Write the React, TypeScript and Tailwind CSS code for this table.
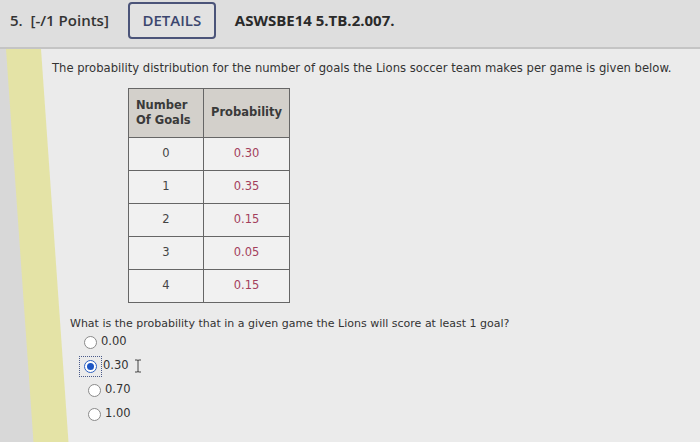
import React from 'react';

const rows = [
  { goals: '0', prob: '0.30' },
  { goals: '1', prob: '0.35' },
  { goals: '2', prob: '0.15' },
  { goals: '3', prob: '0.05' },
  { goals: '4', prob: '0.15' },
];

const options = ['0.00', '0.30', '0.70', '1.00'];

function Radio({ checked }: { checked: boolean }) {
  return (
    <span
      className={`flex h-[13px] w-[13px] items-center justify-center rounded-full border bg-white ${
        checked ? 'border-[#2b5fc0]' : 'border-[#8a8a8a]'
      }`}
    >
      {checked && <span className="h-[7px] w-[7px] rounded-full bg-[#1d56c4]" />}
    </span>
  );
}

function IBeam() {
  return (
    <svg width="8" height="14" viewBox="0 0 8 14" className="ml-[5px]">
      <path d="M1 1h2.2M4.8 1H7M4 1.5v11M1 13h2.2M4.8 13H7M3 1c.6 0 1 .3 1 .8M5 1c-.6 0-1 .3-1 .8M3 13c.6 0 1-.3 1-.8M5 13c-.6 0-1-.3-1-.8" stroke="#444" strokeWidth="1" fill="none" />
    </svg>
  );
}

export default function App() {
  return (
    <div className="h-[442px] w-[700px] overflow-hidden bg-[#d8d8d8] font-['DejaVu_Sans',sans-serif] text-[#333]">
      {/* Header */}
      <div className="flex h-[49px] items-start border-b-2 border-[#c4c4c4] bg-[#dedede] pl-[10px] pt-[2px] font-['Open_Sans',sans-serif]">
        <span className="mt-[7px] text-[15px] font-semibold text-[#333]">5.&nbsp; [-/1 Points]</span>
        <div className="ml-[19px] flex h-[37px] w-[88px] items-center justify-center rounded-[4px] border-2 border-[#4b5479] bg-[#e2e2e2] text-[15px] font-semibold text-[#3b466e]">
          DETAILS
        </div>
        <span className="ml-[19px] mt-[7px] text-[15px] font-bold text-[#2a2a2a]">ASWSBE14 5.TB.2.007.</span>
      </div>

      {/* Body */}
      <div className="flex h-[393px]">
        <div className="ml-[6px] w-[35px] origin-top skew-x-[4deg] bg-[#e4e3a6]" />
        <div className="flex-1 bg-[#ebebeb] pl-[11px]">
          <p className="mt-[11px] whitespace-nowrap text-[11.6px] leading-[16px] text-[#333]">
            The probability distribution for the number of goals the Lions soccer team makes per game is given below.
          </p>

          <table className="ml-[76px] mt-[12px] border-collapse text-[11.5px]">
            <thead>
              <tr className="h-[49px] bg-[#d3d0cb]">
                <th className="w-[75px] border border-[#666] px-[7px] text-left font-bold leading-[15px] text-[#3a3a3a]">
                  Number
                  <br />
                  Of Goals
                </th>
                <th className="w-[86px] border border-[#666] font-bold text-[#3a3a3a]">Probability</th>
              </tr>
            </thead>
            <tbody>
              {rows.map((r) => (
                <tr key={r.goals} className="h-[33px] bg-[#f1f1f1]">
                  <td className="border border-[#666] text-center text-[#444]">{r.goals}</td>
                  <td className="border border-[#666] text-center text-[#a33f5c]">{r.prob}</td>
                </tr>
              ))}
            </tbody>
          </table>

          <p className="ml-[18px] mt-[13px] whitespace-nowrap text-[11px] leading-[16px] text-[#333]">
            What is the probability that in a given game the Lions will score at least 1 goal?
          </p>

          <div className="ml-[28px] -mt-[2px] flex flex-col">
            {options.map((o, i) => (
              <label
                key={o}
                className={`flex h-[24px] items-center text-[11.5px] text-[#333] ${i >= 2 ? 'ml-[4px]' : ''}`}
              >
                {i === 1 ? (
                  <>
                    <span className="-ml-[1px] flex h-[21px] w-[23px] items-center justify-center border border-dotted border-[#4a5a8a]">
                      <Radio checked />
                    </span>
                    <span className="ml-[1px]">{o}</span>
                    <IBeam />
                  </>
                ) : (
                  <>
                    <span className="ml-[4px]">
                      <Radio checked={false} />
                    </span>
                    <span className="ml-[4px]">{o}</span>
                  </>
                )}
              </label>
            ))}
          </div>
        </div>
      </div>
    </div>
  );
}
